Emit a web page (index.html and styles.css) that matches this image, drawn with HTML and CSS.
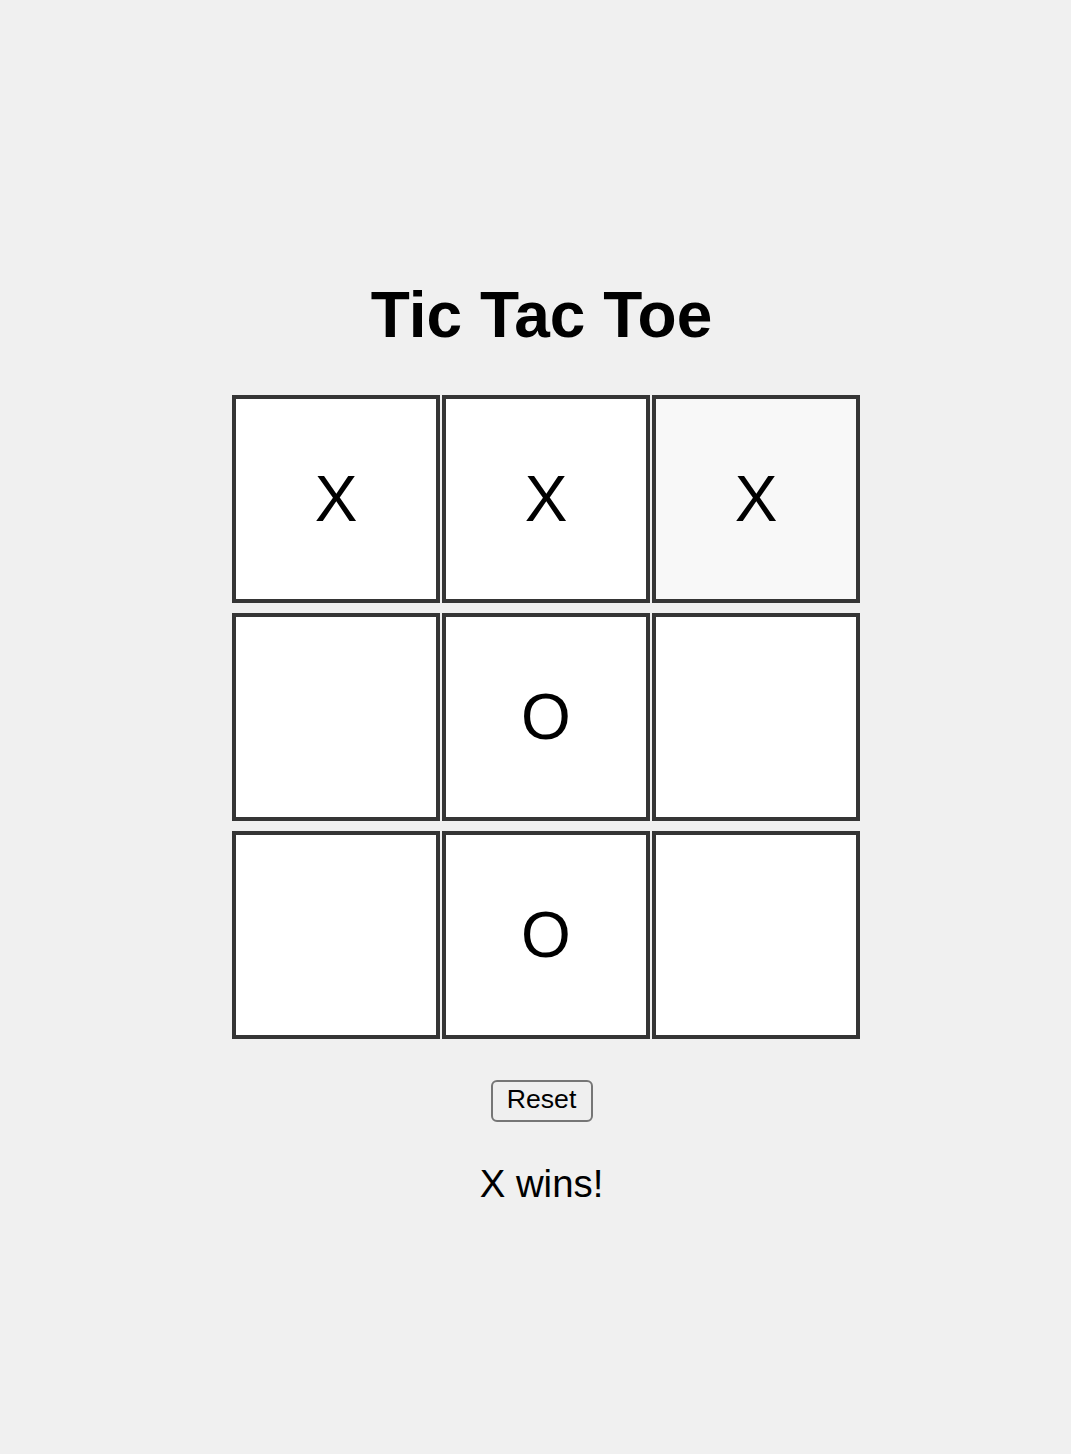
FILE: index.html
```html
<!DOCTYPE html>
<html lang="en">
<head>
<meta charset="utf-8">
<title>Tic Tac Toe</title>
<link rel="stylesheet" href="styles.css">
</head>
<body>
<div class="game">
  <h1 class="title">Tic Tac Toe</h1>
  <div class="board">
    <div class="cell">X</div>
    <div class="cell">X</div>
    <div class="cell cell-hover">X</div>
    <div class="cell"></div>
    <div class="cell">O</div>
    <div class="cell"></div>
    <div class="cell"></div>
    <div class="cell">O</div>
    <div class="cell"></div>
  </div>
  <button class="reset" type="button">Reset</button>
  <div class="status">X wins!</div>
</div>
</body>
</html>
```

FILE: styles.css
```css
html, body {
  margin: 0;
  padding: 0;
  background: #f0f0f0;
}

body {
  font-family: "Liberation Sans", Arial, sans-serif;
  color: #000;
}

.game {
  display: flex;
  flex-direction: column;
  align-items: center;
  padding-top: 278px;
  padding-left: 12px;
}

.title {
  margin: 0 0 43px 0;
  font-size: 64px;
  line-height: 74px;
  font-weight: bold;
}

.board {
  display: grid;
  grid-template-columns: repeat(3, 208px);
  grid-auto-rows: 208px;
  column-gap: 2px;
  row-gap: 10px;
  margin-left: 9px;
}

.cell {
  box-sizing: border-box;
  background: #ffffff;
  border: 4px solid #353535;
  display: flex;
  align-items: center;
  justify-content: center;
  font-size: 64px;
  line-height: 74px;
}

.cell-hover {
  background: #f8f8f8;
}

.reset {
  margin-top: 41px;
  box-sizing: border-box;
  width: 102px;
  height: 42px;
  padding: 0 0 4px 0;
  font-family: "Liberation Sans", Arial, sans-serif;
  font-size: 26.67px;
  line-height: 30px;
  color: #000;
  background: #efefef;
  border: 2px solid #767676;
  border-radius: 6px;
}

.status {
  margin-top: 40px;
  font-size: 38.4px;
  line-height: 44px;
}
```
